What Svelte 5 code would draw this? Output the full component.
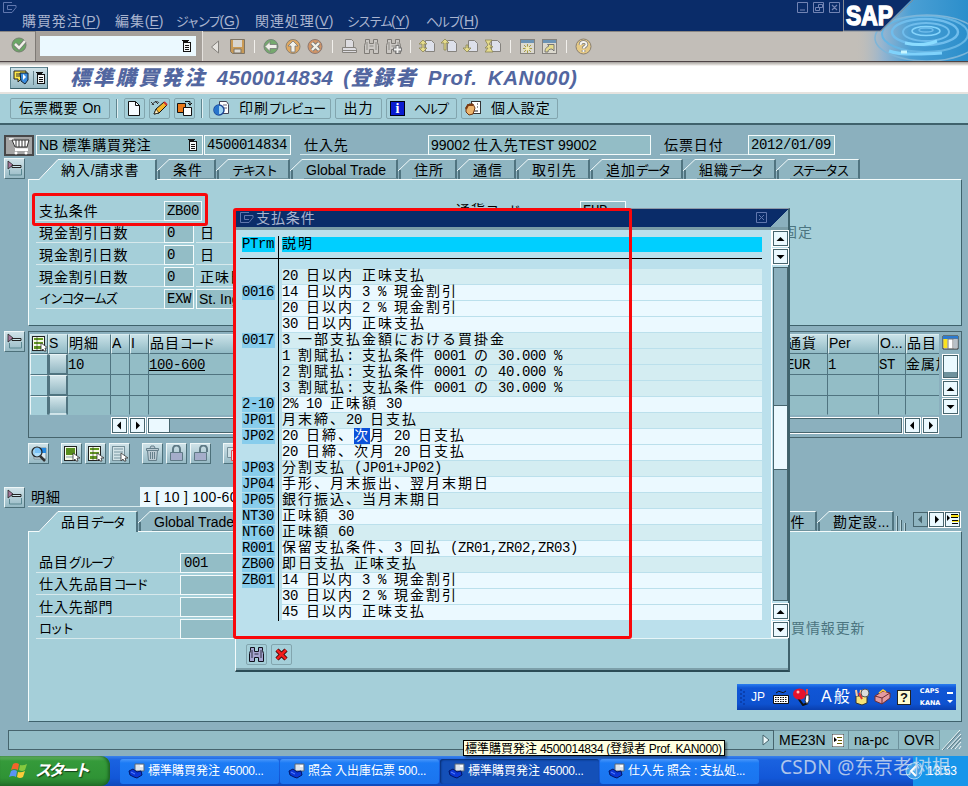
<script>
    const menus = [
        { text: '購買発注', key: 'P', width: 93 },
        { text: '編集', key: 'E', width: 61 },
        { text: 'ジャンプ', key: 'G', width: 79 },
        { text: '関連処理', key: 'V', width: 92 },
        { text: 'システム', key: 'Y', width: 79 },
        { text: 'ヘルプ', key: 'H', width: 60 },
    ];

    const topTabs = [
        { text: '条件', width: 59 },
        { text: 'テキスト', width: 74 },
        { text: 'Global Trade', width: 108 },
        { text: '住所', width: 59 },
        { text: '通信', width: 59 },
        { text: '取引先', width: 74 },
        { text: '追加データ', width: 93 },
        { text: '組織データ', width: 93 },
        { text: 'ステータス', width: 84 },
    ];

    const detailTabs = [
        { text: 'Global Trade', width: 110 },
        { text: '数量/重量', width: 100 },
        { text: '納入日程', width: 90 },
        { text: '納入', width: 60 },
        { text: '請求書', width: 90 },
        { text: '追加データ', width: 112 },
        { text: '国際取引条件', width: 117 },
        { text: '勘定設...', width: 77 },
    ];

    const terms = [
        { label: '支払条件', value: 'ZB00', wide: true },
        { label: '現金割引日数', value: '0', extra: '日' },
        { label: '現金割引日数', value: '0', extra: '日' },
        { label: '現金割引日数', value: '0', extra: '正味日数' },
        { label: 'インコタームズ', value: 'EXW', place: 'St. Ingbert' },
    ];

    const columns = [
        { text: 'S', width: 20 },
        { text: '明細', width: 43, value: '10' },
        { text: 'A', width: 19 },
        { text: 'I', width: 19 },
        { text: '品目コード', width: 180, value: '100-600', link: true },
        { text: 'テキスト (短)', width: 250 },
        { text: '正味価格', width: 180 },
        { text: '通貨', width: 42, value: 'EUR' },
        { text: 'Per', width: 51, value: '1' },
        { text: 'O...', width: 27, value: 'ST' },
        { text: '品目', width: 34, value: '金属加' },
    ];

    const details = [
        { label: '品目グループ', value: '001' },
        { label: '仕入先品目コード', value: '' },
        { label: '仕入先部門', value: '' },
        { label: 'ロット', value: '' },
    ];

    const payTerms = [
        { code: '', lines: ['20 日以内 正味支払'] },
        { code: '0016', lines: ['14 日以内 3 % 現金割引', '20 日以内 2 % 現金割引', '30 日以内 正味支払'] },
        {
            code: '0017',
            lines: [
                '3 一部支払金額における買掛金',
                '1 割賦払: 支払条件 0001 の 30.000 %',
                '2 割賦払: 支払条件 0001 の 40.000 %',
                '3 割賦払: 支払条件 0001 の 30.000 %',
            ],
        },
        { code: '2-10', lines: ['2% 10 正味額 30'] },
        { code: 'JP01', lines: ['月末締、20 日支払'] },
        { code: 'JP02', lines: ['20 日締、[次]月 20 日支払', '20 日締、次月 20 日支払'] },
        { code: 'JP03', lines: ['分割支払 (JP01+JP02)'] },
        { code: 'JP04', lines: ['手形、月末振出、翌月末期日'] },
        { code: 'JP05', lines: ['銀行振込、当月末期日'] },
        { code: 'NT30', lines: ['正味額 30'] },
        { code: 'NT60', lines: ['正味額 60'] },
        { code: 'R001', lines: ['保留支払条件、3 回払 (ZR01,ZR02,ZR03)'] },
        { code: 'ZB00', lines: ['即日支払 正味支払'] },
        { code: 'ZB01', lines: ['14 日以内 3 % 現金割引', '30 日以内 2 % 現金割引', '45 日以内 正味支払'] },
    ];

    const tasks = [
        { text: '標準購買発注 45000...' },
        { text: '照会 入出庫伝票 500...' },
        { text: '標準購買発注 45000...', active: true },
        { text: '仕入先 照会 : 支払処...' },
    ];

    const standard = [
        'back', 'save', '|', 'left', 'up', 'cancel', '|', 'print', 'find', 'findnext', '|',
        'first', 'prev', 'next', 'last', '|', 'session', 'shortcut', '|', 'help',
    ];

    // Split a label into kanji, kana and latin parts, each has its own pitch
    function runs(text) {
        const parts = text.match(/\[.\]|[ァ-ヿ]+|[ぁ-ん一-龥、]+|[^ぁ-ヿ一-龥、[]+|\[/g) || [];
        return parts.map((p) => {
            if (/^\[.\]$/.test(p)) return { kind: 'han picked', text: p[1] };
            if (/^[ァ-ヿ]/.test(p)) return { kind: 'kana', text: p };
            if (/^[ぁ-ん一-龥、]/.test(p)) return { kind: 'han', text: p };
            return { kind: 'latin', text: p };
        });
    }
</script>

{#snippet t(text)}<span class="t">{#each runs(text) as r}<span class={r.kind}>{r.text}</span>{/each}</span>{/snippet}

{#snippet list()}
    <svg class="list" width="10" height="12" viewBox="0 0 10 12" shape-rendering="crispEdges">
        <rect x="1.5" y="2.5" width="7" height="9" fill="#f4f8f8" stroke="#111" />
        <path d="M0 0h7v1H6v1H5v1H2V2H1V1H0z" fill="#111" />
        <path d="M3 5h4v1H3zM3 7h4v1H3zM3 9h4v1H3z" fill="#111" />
    </svg>
{/snippet}

{#snippet binocular(stroke, fill)}
    <path d="M2.5 1.5h4v4h4v-4h4v3l1 3v8h-5v-4h-4v4h-5v-8l1-3z" {fill} {stroke} />
    <path d="M6.500 8h4M4 4v8M13 4v8" {stroke} stroke-width=".8" />
{/snippet}

{#snippet sheet(d, x)}
    <path d="M{x + .5} 2.5h6l3 3v8h-9z" fill="#dde0ea" stroke="#85827d" />
    <path {d} fill="#e6dc8c" stroke="#8c8554" stroke-width=".8" />
{/snippet}

{#snippet icon(name)}
    <svg class="icon" width="17" height="17" viewBox="0 0 17 17">
        {#if name === 'back'}
            <path d="M11.500 3v12L4.500 9z" fill="#e5e3df" stroke="#85827d" />
        {:else if name === 'save'}
            <path d="M1.500 1.500h14v14h-12l-2-2z" fill="#c99a55" stroke="#7e7465" />
            <path d="M4 2h9v7H4z" fill="#d8d5cf" /><path d="M5 11h7v4H5z" fill="#dcdad5" stroke="#7e7465" />
        {:else if name === 'left'}
            <circle cx="8" cy="8.500" r="7" fill="#75a96d" stroke="#77867a" />
            <path d="M2 8.500l5-5v3h7v4H7v3z" fill="#f1f1e9" stroke="#777" stroke-width=".8" />
        {:else if name === 'up'}
            <circle cx="8" cy="8.500" r="7" fill="#dfa861" stroke="#8b8170" />
            <path d="M8 3l5 5h-3v6H6V8H3z" fill="#f1f1e9" stroke="#777" stroke-width=".8" />
        {:else if name === 'cancel'}
            <circle cx="8" cy="8.500" r="7" fill="#d19567" stroke="#8b7770" />
            <path d="M5 5l7 7M12 5l-7 7" stroke="#777" stroke-width="4" /><path d="M5 5l7 7M12 5l-7 7" stroke="#f1f1e9" stroke-width="2.400" />
        {:else if name === 'print'}
            <path d="M4.500 9V1.500h6l2 2V9M1.500 9.500h13l1 2v3h-14z" fill="#dddce0" stroke="#85827d" />
            <path d="M2 12.500h13" stroke="#85827d" />
        {:else if name === 'find'}
            {@render binocular('#7e7b76', '#cbc8c4')}
        {:else if name === 'findnext'}
            {@render binocular('#7e7b76', '#cbc8c4')}
            <path d="M12.500 7v9M8 11.500h9" stroke="#777" stroke-width="4" /><path d="M12.500 8v7M9 11.500h7" stroke="#f1f1ef" stroke-width="2" />
        {:else if name === 'first'}
            {@render sheet('M4 2l4 4H5v4h3l-4 4-4-4h3V6H0z', 6)}
        {:else if name === 'prev'}
            {@render sheet('M4 1l4 4H5v7H3V5H0z', 6)}
        {:else if name === 'next'}
            {@render sheet('M3 7h2v3h3l-4 4-4-4h3z', 5)}
        {:else if name === 'last'}
            {@render sheet('M0 2h7L4 6l4 3H5l3 5H0l3-4H0l3-3z', 6)}
        {:else if name === 'session' || name === 'shortcut'}
            <rect x="1.500" y="1.500" width="14" height="14" fill="#dcd9ce" stroke="#85827d" />
            <path d="M2 2h13v3H2z" fill="#6c93b4" />
            {#if name === 'session'}
                <path d="M8.500 6v9M4 10.500h9M5 7l7 7M12 7l-7 7" stroke="#a79e45" /><circle cx="8.500" cy="10.500" r="2" fill="#f5edb0" />
            {:else}
                <path d="M4 14c0-4 2-5 4-6L6.500 6.500H13V13l-2-2c-3 0-4 1-4 3z" fill="#e6dc8c" stroke="#777" />
            {/if}
        {:else if name === 'help'}
            <circle cx="8.500" cy="8.500" r="7.500" fill="#e6ca86" stroke="#8b8170" />
            <path d="M5.500 7c0-4 6-4 6-.5 0 2-3 2-3 4M8.500 12v2" fill="none" stroke="#777" stroke-width="3.500" /><path d="M5.500 7c0-4 6-4 6-.5 0 2-3 2-3 4M8.500 12v2" fill="none" stroke="#f7f5ef" stroke-width="2" />
        {:else if name === 'ok'}
            <circle cx="8" cy="8" r="7" fill="#6ba766" stroke="#74806f" />
            <path d="M4 7l4 4 6-7" fill="none" stroke="#777" stroke-width="4" /><path d="M4 7l4 4 6-7" fill="none" stroke="#f1f1e9" stroke-width="2.500" />
        {:else if name === 'page'}
            <path d="M2.500 1.500h7l4 4v10h-11z" fill="#f7fcff" stroke="#111" /><path d="M9.500 1.500v4h4" fill="none" stroke="#111" />
        {:else if name === 'edit'}
            <path d="M3 14l2-5 8-7 3 3-8 8z" fill="#f5b62b" stroke="#111" /><path d="M3 14l2-5 3 4z" fill="#fff0c0" stroke="#111" stroke-width=".7" />
            <path d="M0 2l3 3M4 1l3 3M1 5c2-4 6-4 7-2" stroke="#333" fill="none" /><path d="M13 2l3 3" stroke="#c33" stroke-width="2" />
        {:else if name === 'copy'}
            <path d="M1.500 3.500h8v9h-8z" fill="#e97818" stroke="#111" /><path d="M7.500 7.500h8v8h-8z" fill="#fff" stroke="#111" />
            <path d="M9 1.500h5v4M12 3l2 2 2-2" fill="none" stroke="#111" />
        {:else if name === 'preview'}
            <path d="M6.500 1.500h7l2 3v9h-9z" fill="#fff" stroke="#445" /><path d="M10 5h4M11 8h3" stroke="#667" />
            <circle cx="6" cy="10" r="5" fill="#9fd4f2" stroke="#1d4796" stroke-width="1.500" /><path d="M6 5v10a5 5 0 0 1 0-10" fill="#2874cc" />
        {:else if name === 'person'}
            <rect x="6.500" y="1.500" width="9" height="12" fill="#fff" stroke="#333" /><path d="M12 4h1M12 7h1M9 11h4" stroke="#222" />
            <path d="M1 7l3-3h4l2 4-2 6-4 1-3-3z" fill="#edb56e" stroke="#6d3510" /><path d="M1 9l2-4h5" stroke="#7b3b12" fill="none" stroke-width="2" />
        {:else if name === 'tree'}
            <path d="M2 1v8l5-4z" fill="#a8789c" stroke="#222" stroke-width=".8" /><path d="M6 5.500h9v2H6z" fill="#cfe6ec" stroke="#222" /><path d="M3.500 10v5h12V9" fill="none" stroke="#5a8791" />
        {:else if name === 'magnify'}
            <path d="M4 3h12v11H4z" fill="#d9e9f0" stroke="#7b8f99" /><path d="M5 3h11v5H5z" fill="#2388e2" />
            <circle cx="7" cy="7" r="5" fill="#9edaff" fill-opacity=".7" stroke="#222" stroke-width="1.200" /><path d="M10 11l5 5" stroke="#333" stroke-width="2.500" />
        {:else if name === 'block' || name === 'rows' || name === 'rowsoff'}
            <rect x="1.500" y="1.500" width="12" height="14" fill={name === 'rowsoff' ? '#d3e3e7' : '#f5fae8'} stroke={name === 'rowsoff' ? '#75909a' : '#222'} />
            {#if name === 'block'}
                <path d="M3 3h9v7H3z" fill="#578d1d" /><path d="M3 12h8" stroke="#87a2ae" />
            {:else if name === 'rows'}
                <path d="M3 3h9v2H3zM3 7h9v2H3zM3 11h9v3H3z" fill="#62991f" /><path d="M6 2v13" stroke="#333" stroke-width=".6" />
            {:else}
                <path d="M3 4h9M3 7h9M3 10h9M3 13h9" stroke="#7795a0" />
            {/if}
            <path d="M10 8v8l2-2 1 2h2l-1-3h3z" fill="#fff" stroke="#333" stroke-width=".8" />
        {:else if name === 'trash'}
            <path d="M3.500 5.500h10l-1 10h-8zM2.500 3.500h12v2h-12zM6 3l1-2h3l1 2" fill="#bccbd3" stroke="#657f8b" /><path d="M6.500 7v7M8.500 7v7M10.500 7v7" stroke="#657f8b" />
        {:else if name === 'lock' || name === 'unlock'}
            <path d={name === 'lock' ? 'M5 8V4a3.500 3.500 0 0 1 7 0v4' : 'M8 8V4a3.500 3.500 0 0 1 7 0v3'} fill="none" stroke="#5f7a86" stroke-width="2" />
            <path d="M2.500 7.500h12v8h-12z" fill="#a5adca" stroke="#5f7a86" />
        {:else if name === 'layers'}
            <path d="M2.500 2.500h9v10h-9z" fill="#cde0e5" stroke="#75909a" /><path d="M6.500 5.500h9v10h-9z" fill="#dfe7e9" stroke="#d4545c" />
        {:else if name === 'closered'}
            <path d="M4 4l9 9M13 4l-9 9" stroke="#300" stroke-width="4.500" /><path d="M4 4l9 9M13 4l-9 9" stroke="#f11d1d" stroke-width="2.800" />
        {:else if name === 'bino'}
            {@render binocular('#10101c', '#a5a5d0')}
        {:else if name === 'config'}
            <path d="M1 2h15v13H1z" fill="#fff" stroke="#333" /><path d="M1 2h15v3H1z" fill="#2d7bcf" /><path d="M1.500 5h4v9h-4z" fill="#fbe31d" /><path d="M6 5v10M11 5v10M6 5h9" stroke="#777" /><path d="M11.500 5h4v9h-4z" fill="#b9c1c7" />
        {:else if name === 'program'}
            <path d="M7 1h9v7H7z" fill="#dce4ed" stroke="#596678" /><path d="M12 2h3v2h-3z" fill="#fff" />
            <path d="M1 8l4-2 4 3 4-1 1 4-5 3-3-1-4-2z" fill="#0a35d4" stroke="#001466" /><path d="M3 9l4 2" stroke="#5b84ff" />
        {/if}
    </svg>
{/snippet}

{#snippet arrow(dir, off = false)}
    <span class="arrow" class:off>
        <svg width="9" height="9" viewBox="0 0 9 9">
            {#if dir === 'up'}<path d="M0.500 7h8l-4-4z" fill="#000" />
            {:else if dir === 'down'}<path d="M0.500 3h8l-4 4z" fill="#000" />
            {:else if dir === 'left'}<path d="M6 0.500v8L2 4.500z" fill={off ? '#46646d' : '#000'} />
            {:else}<path d="M3 0.500v8l4-4z" fill="#000" />{/if}
        </svg>
    </span>
{/snippet}

{#snippet tab(text, width, active = false)}
    <div class="tab" class:active style="width: {width}px">
        {#if active}
            <svg width="22" height="21" viewBox="0 0 22 21"><path d="M0 21L19 .5h3V21z" fill="#a5cfd9" /><path d="M0 20.500L19 .5h3" fill="none" stroke="#fff" /></svg>
        {:else}
            <svg width="14" height="20" viewBox="0 0 14 20"><path d="M1 12L12 .5h2V20H2z" fill="#8fb5c1" /><path d="M0 12L12 .5h2" fill="none" stroke="#f2fafa" /><path d="M2 11v9" stroke="#507480" stroke-width="2" /></svg>
        {/if}
        <div class="tab-body">{@render t(text)}</div>
    </div>
{/snippet}

<div class="screen">
    <header>
        <div class="menubar">
            <svg class="sysmenu" width="15" height="12" viewBox="0 0 15 12"><path d="M10 .5H1.500v10H10l4-5V3.500H5.500v4H10" fill="none" stroke="#6077ae" /></svg>
            <nav>
                {#each menus as m}
                    <span style="width: {m.width}px">{@render t(m.text)}<span class="key">(<u>{m.key}</u>)</span></span>
                {/each}
            </nav>
            <div class="winbtns">
                <svg width="44" height="12" viewBox="0 0 44 12" fill="none" stroke="#7284b4">
                    <path d="M.5.5h10v10H.5zM16.500.5h10v10h-10zM32.500.5h10v10h-10z" />
                    <path d="M3 8h5M35 3l5 5M40 3l-5 5" stroke-width="1.200" /><path d="M18.500 5.500h4v3h-4zM21.500 2.500h4v3h-4z" />
                </svg>
            </div>
        </div>
        <svg class="logo" width="125" height="61" viewBox="0 0 125 61">
            <defs>
                <linearGradient id="water" x1="0" x2="1"><stop offset="0" stop-color="#c2beb8" stop-opacity="0" /><stop offset=".25" stop-color="#93b4d0" /><stop offset=".5" stop-color="#4a9fd4" /><stop offset="1" stop-color="#2b8ecb" /></linearGradient>
                <clipPath id="pond"><path d="M68 0h57v61H22V31h16z" /></clipPath>
            </defs>
            <path d="M0 31h125v30H0z" fill="#c2beb8" />
            <path d="M0 0h70L38 31H0z" fill="#0a2c69" />
            <path d="M68 0h57v61H12V31h25z" fill="url(#water)" />
            <g clip-path="url(#pond)" fill="none" stroke="#70bdec">
                <ellipse cx="83" cy="30" rx="7" ry="2" stroke-width="1.500" /><ellipse cx="83" cy="31" rx="14" ry="4.500" stroke-width="1.500" stroke="#86d4fb" />
                <ellipse cx="83" cy="32" rx="23" ry="9" stroke-width="2" /><ellipse cx="82" cy="32" rx="33" ry="13" stroke-width="2.500" />
                <ellipse cx="82" cy="34" rx="43" ry="18" stroke-width="2" stroke="#66b5e3" /><ellipse cx="84" cy="38" rx="52" ry="23" stroke-width="1.500" stroke="#7db5d8" />
                <path d="M46 51q12 5 53 2" stroke="#7fd2fb" stroke-width="3" /><path d="M62 43q18 4 32-2" stroke="#8bdcff" stroke-width="3" /><path d="M58 52h6" stroke="#c8f6ff" stroke-width="3" />
            </g>
            <path d="M.5 0v31H38L70 0" fill="none" stroke="#858b93" />
            <text x="3" y="25" textLength="47" lengthAdjust="spacingAndGlyphs">SAP</text>
        </svg>
        <div class="toolbar">
            <div class="enter">{@render icon('ok')}</div>
            <div class="command"><div class="okcode">{@render list()}</div></div>
            <div class="std">
                {#each standard as name}
                    {#if name === '|'}<i class="bar"></i>{:else}{@render icon(name)}{/if}
                {/each}
            </div>
        </div>
    </header>

    <div class="titlebar">
        <span class="raised services">
            <svg width="18" height="17" viewBox="0 0 18 17"><path d="M1 2h12v8H8l-3 3v-3H1z" fill="#ffe84a" stroke="#222" /><path d="M3 5h6M3 7h5" stroke="#333" /><path d="M7 4h8v7l-3 4-4-3z" fill="#3a8de0" stroke="#123" /><path d="M10 5l3 3-3 3z" fill="#fff" /></svg>
            <i></i>{@render list()}
        </span>
        <h1><b class="wide">標準購買発注</b> 4500014834 (<b>登録者</b> <span>Prof. KAN000)</span></h1>
    </div>

    <div class="appbar">
        <span class="flat" style="width: 100px">{@render t('伝票概要 On')}</span>
        <i class="bar"></i>
        <span class="flat sq">{@render icon('page')}</span>
        <span class="flat sq">{@render icon('edit')}</span>
        <span class="flat sq">{@render icon('copy')}</span>
        <i class="bar"></i>
        <span class="flat lead" style="width: 122px">{@render icon('preview')}{@render t('印刷プレビュー')}</span>
        <span class="flat" style="width: 47px">{@render t('出力')}</span>
        <span class="flat lead" style="width: 71px"><em class="info">i</em>{@render t('ヘルプ')}</span>
        <span class="flat lead" style="width: 97px">{@render icon('person')}{@render t('個人設定')}</span>
    </div>

    <main>
        <div class="docline">
            <svg class="cart" width="30" height="21" viewBox="0 0 30 21"><rect x="1" y="1" width="28" height="19" fill="#a4a5a5" stroke="#474748" stroke-width="2" /><path d="M5 4h4l3 10h12" fill="none" stroke="#fff" stroke-width="1.500" /><path d="M8 5h17l-2 7H11z" fill="#fff" stroke="#333" /><path d="M12 5v7M15 5v7M18 5v7M21 5v7" stroke="#333" /><path d="M11 15h13" stroke="#fff" stroke-width="2" /><circle cx="12" cy="18" r="1.500" fill="#fff" /><circle cx="22" cy="18" r="1.500" fill="#fff" /></svg>
            <span class="field doctype">{@render t('NB 標準購買発注')}{@render list()}</span>
            <span class="field mono docno">4500014834</span>
            <span class="label vendor">{@render t('仕入先')}</span>
            <span class="field vendorname">{@render t('99002 仕入先TEST 99002')}</span>
            <span class="label date">{@render t('伝票日付')}</span>
            <span class="field mono dateval">2012/01/09</span>
        </div>

        <section class="block headblock">
            <span class="raised sq">{@render icon('tree')}</span>
            <div class="pane">
                <div class="tabs">
                    {@render tab('納入/請求書', 118, true)}
                    {#each topTabs as x}{@render tab(x.text, x.width)}{/each}
                </div>
                <div class="panel">
                    <div class="form">
                        {#each terms as row, i}
                            <div class="row">
                                <span class="label">{@render t(row.label)}</span>
                                <span class="field mono val" class:wide={row.wide}>{row.value}</span>
                                {#if row.extra}<span class="label extra">{@render t(row.extra)}</span>{/if}
                                {#if row.place}<span class="field place">{@render t(row.place)}</span>{/if}
                                {#if i === 0}
                                    <span class="label cur">{@render t('通貨コード')}</span>
                                    <span class="field mono curval">EUR</span>
                                {:else if i === 1}
                                    <span class="fixed">{@render t('固定')}</span>
                                {/if}
                            </div>
                        {/each}
                    </div>
                </div>
            </div>
        </section>

        <section class="block itemblock">
            <span class="raised sq">{@render icon('tree')}</span>
            <div class="pane">
                <div class="grid">
                    <div class="cells">
                        <div class="tr th">
                            <span class="pick">{@render icon('rows')}</span>
                            {#each columns as c}<span style="width: {c.width}px">{@render t(c.text)}</span>{/each}
                        </div>
                        {#each [0, 1, 2] as r}
                            <div class="tr" class:last={r === 2}>
                                <span class="pick knob"></span>
                                {#each columns as c, i}
                                    <span class:status={i === 0} style="width: {c.width}px">
                                        {#if r === 0 && c.value}
                                            {#if c.link}<u class="mono">{c.value}</u>{:else if /[一-龥]/.test(c.value)}{@render t(c.value)}{:else}<span class="mono">{c.value}</span>{/if}
                                        {/if}
                                    </span>
                                {/each}
                            </div>
                        {/each}
                        <div class="hscroll">
                            {@render arrow('left')}{@render arrow('right')}
                            <div class="track"><i></i></div>
                            {@render arrow('left')}{@render arrow('right')}
                        </div>
                    </div>
                    <div class="vscroll">
                        {@render icon('config')}
                        <div class="vtrack"><i></i></div>
                        {@render arrow('up')}{@render arrow('down')}
                    </div>
                </div>
                <div class="tools">
                    {#each ['magnify', '', 'block', 'rows', 'rowsoff', '', 'trash', 'lock', 'unlock', '', 'layers'] as name}
                        {#if name}<span class="raised sq">{@render icon(name)}</span>{:else}<i></i>{/if}
                    {/each}
                </div>
            </div>
        </section>

        <section class="block detailblock">
            <span class="raised sq">{@render icon('tree')}</span>
            <div class="pane">
                <div class="itemline">
                    <span class="label">{@render t('明細')}</span>
                    <span class="combo">1 [ 10 ] 100-600</span>
                </div>
                <div class="tabs">
                    {@render tab('品目データ', 99, true)}
                    {#each detailTabs as x}{@render tab(x.text, x.width)}{/each}
                    <svg class="more" width="12" height="20" viewBox="0 0 12 20"><path d="M2.500 4v16M6.500 8v12M10.500 11v9" stroke="#46646d" /><path d="M1.500 4v16M5.500 8v12M9.500 11v9" stroke="#b8d4dc" /></svg>
                    <div class="tabnav">
                        {@render arrow('left', true)}{@render arrow('right')}
                        <span class="arrow"><svg width="13" height="12" viewBox="0 0 13 12"><path d="M1 1v6l3-3z" fill="#000" /><path d="M5 1h8v2H5zM6 6h7v2H6z" fill="#fbe31d" /><path d="M5 .5h7M5 3.500h7M6 6.500h6M6 9.500h6" stroke="#000" /></svg></span>
                    </div>
                </div>
                <div class="panel">
                    <div class="form">
                        {#each details as row, i}
                            <div class="row">
                                <span class="label long">{@render t(row.label)}</span>
                                <span class="field mono group">{row.value}</span>
                                {#if i === 3}<span class="fixed renew">{@render t('買情報更新')}</span>{/if}
                            </div>
                        {/each}
                    </div>
                </div>
            </div>
        </section>

        <div class="statusbar">
            <div class="message"><svg width="8" height="12" viewBox="0 0 8 12"><path d="M1 1l6 5-6 5z" fill="#e9f6f8" stroke="#46646d" /></svg></div>
            <span class="tcode">{@render t('ME23N')}<svg width="12" height="13" viewBox="0 0 12 13"><rect width="12" height="13" fill="#fff" stroke="#333" /><path d="M2 3v5l3-2z" fill="#000" /><path d="M5 3.500h5M6 6.500h4M5 9.500h5" stroke="#665c00" /></svg></span>
            <span class="host">{@render t('na-pc')}</span>
            <span class="mode">{@render t('OVR')}</span>
            <svg class="grip" width="22" height="20" viewBox="0 0 22 20"><path d="M0 0h20L2 20H0z" fill="#93bdc6" /><path d="M20 0L2 20M21 4L7 19M21 8L11 19M21 12L15 19M21 16L19 19" stroke="#eef6f8" /><path d="M20 1.500L3 20M21 5.500L8.500 19M21 9.500L12.500 19" stroke="#46646d" stroke-width=".7" /></svg>
        </div>
    </main>

    <footer>
        <div class="start">
            <svg width="20" height="18" viewBox="0 0 20 18"><path d="M4 2q3-2 6 0L9 8Q5 6 2 8z" fill="#f3652b" /><path d="M11 3q3 1 7-1l-2 6q-3 2-6 0z" fill="#86c93f" /><path d="M2 9q3-2 6 0l-1 6q-3-2-7 0z" fill="#5994f5" /><path d="M9 10q3 1 7-1l-2 6q-3 2-6 0z" fill="#fbcb3a" /></svg>
            <strong>スタート</strong>
        </div>
        {#each tasks as task}
            <div class="task" class:active={task.active}>{@render icon('program')}{@render t(task.text)}</div>
        {/each}
        <div class="tray"><svg width="18" height="20" viewBox="0 0 18 20"><circle cx="9" cy="10" r="8" fill="#3f9fe8" stroke="#a5d5f5" /><path d="M11 5L6 10l5 5" fill="none" stroke="#fff" stroke-width="2" /></svg><span>13:53</span></div>
    </footer>

    <div class="dialog">
        <div class="dlg-title">
            <svg width="15" height="12" viewBox="0 0 15 12"><path d="M10 .5H1.500v10H10l4-5V3.500H5.500v4H10" fill="none" stroke="#6077ae" /></svg>
            {@render t('支払条件')}
            <svg class="close" width="12" height="12" viewBox="0 0 12 12" fill="none" stroke="#6077ae"><path d="M.5.5h10v10H.5zM3 3l5 5M8 3l-5 5" /></svg>
        </div>
        <div class="dlg-body">
            <div class="listing mono">
                <div class="lhead"><span class="code">PTrm</span><span class="desc">{@render t('説明')}</span></div>
                <div class="lrows">
                    {#each payTerms as p, g}
                        {#each p.lines as line, i}
                            <div class="lrow">
                                <span class="code" class:filled={i === 0 && p.code}>{i === 0 ? p.code : ''}</span>
                                <span class="desc" class:odd={g % 2 === 0}>{@render t(line)}</span>
                            </div>
                        {/each}
                    {/each}
                </div>
            </div>
            <div class="dscroll">
                {@render arrow('up')}{@render arrow('down')}
                <div class="dtrack"><i></i></div>
                {@render arrow('up')}{@render arrow('down')}
            </div>
        </div>
        <div class="dlg-foot">
            <span class="flat sq">{@render icon('bino')}</span>
            <span class="flat sq">{@render icon('closered')}</span>
        </div>
    </div>

    <div class="mark mark-term"></div>
    <div class="mark mark-list"></div>

    <div class="ime">
        <svg width="6" height="18" viewBox="0 0 6 18"><path d="M1 2h2M4 4h2M1 6h2M4 8h2M1 10h2M4 12h2M1 14h2M4 16h2" stroke="#0a3fae" stroke-width="2" /></svg>
        <b>JP</b>
        <svg width="17" height="16" viewBox="0 0 17 16"><path d="M3 4q3-3 5-1t5-1" stroke="#111" fill="none" /><path d="M.5 6.500h15v8H.5z" fill="#fff" stroke="#111" /><path d="M2 8.500h12M2 10.500h12M2 12.500h12" stroke="#111" stroke-dasharray="1.500 1" /></svg>
        <svg width="18" height="18" viewBox="0 0 18 18"><path d="M5 10l5 7 5-2" stroke="#111" stroke-width="2" fill="none" /><ellipse cx="6.500" cy="6" rx="6.500" ry="5.500" fill="#e5112c" /><path d="M14 1v6" stroke="#e44" stroke-width="2" /><path d="M13 7h3v6l-2 3-2-3z" fill="#fff" stroke="#333" /><circle cx="5" cy="4" r="1.500" fill="#fbb" /></svg>
        <span class="kana-mode">A 般</span>
        <svg width="17" height="18" viewBox="0 0 17 18"><path d="M2 8h11v7l-5 2-6-2z" fill="#f7e377" stroke="#333" /><path d="M3 8L2 2M6 8l1-6" stroke="#fc9" stroke-width="2" /><circle cx="11" cy="5" r="4" fill="#ddd" stroke="#555" /><path d="M5 5l3 6" stroke="#d33" stroke-width="2" /></svg>
        <svg width="17" height="18" viewBox="0 0 17 18"><path d="M1 8l8-5 7 2v5l-8 6-7-3z" fill="#e59aa0" stroke="#6c2d33" /><path d="M1 8l7 2 8-5M8 10v6" fill="none" stroke="#6c2d33" /><path d="M5 5l4-3 3 2" stroke="#fc3" stroke-width="1.500" fill="none" /></svg>
        <span class="q">?</span>
        <small>CAPS<br />KANA</small>
        <svg width="8" height="18" viewBox="0 0 8 18"><path d="M1 4h6v2H1zM1 12h6l-3 3z" fill="#fff" /></svg>
    </div>

    <div class="tooltip">{@render t('標準購買発注 4500014834 (登録者 Prof. KAN000)')}</div>
    <div class="watermark">CSDN @东京老树根</div>
</div>

<style>
    :global(body) {
        margin: 0;
    }

    .screen {
        position: relative;
        width: 968px;
        height: 786px;
        overflow: hidden;
        display: flex;
        flex-direction: column;
        background: #8bb0be;
        color: #000;
        font-family: "Liberation Sans", "Noto Sans CJK JP", sans-serif;
        font-size: 14px;
        white-space: nowrap;
    }

    .screen :global(*) {
        box-sizing: border-box;
    }

    svg {
        display: block;
        flex: none;
    }

    .t {
        line-height: 18px;
        white-space: pre;
    }

    .han {
        font-size: 14px;
        letter-spacing: 0.900px;
    }

    .kana {
        font-size: 13px;
        letter-spacing: -1.900px;
    }

    .latin {
        font-size: 14px;
    }

    .mono {
        font-family: "Liberation Mono", "Noto Sans CJK JP", monospace;
        font-size: 14px;
        letter-spacing: -0.400px;
    }

    /* header */
    header {
        flex: none;
        height: 62px;
        display: grid;
        grid-template-columns: 843px 125px;
        grid-template-rows: 31px 30px;
        border-bottom: 1px solid #4e4446;
        background: #c2beb8;
    }

    .menubar {
        background: #0a2c69;
        color: #a9b4cf;
        display: flex;
        align-items: flex-start;
        box-shadow: 0 1px 0 #7f8287;
    }

    .sysmenu {
        margin: 2px 3px 0 2px;
    }

    nav {
        display: flex;
        flex: 1;
        padding: 12px 0 0 2px;
        line-height: 19px;
    }

    nav u {
        text-underline-offset: 2px;
    }

    .winbtns {
        padding: 2px 2px 0 0;
    }

    .logo {
        grid-column: 2;
        grid-row: 1 / 3;
    }

    .logo text {
        font: bold 27px "Liberation Sans", sans-serif;
        fill: #fff;
        stroke: #fff;
        stroke-width: 1.500px;
    }

    .toolbar {
        grid-column: 1;
        grid-row: 2;
        display: flex;
        box-shadow: inset 0 1px 0 #8a8783;
    }

    .enter {
        width: 35px;
        padding: 6px 0 0 11px;
    }

    .command {
        width: 168px;
        background: #a6a19b;
        border-left: 1px solid #7e7a75;
        border-right: 1px solid #e5e2de;
        padding: 5px 6px 4px 4px;
    }

    .okcode {
        height: 20px;
        background: #ebf9ff;
        display: flex;
        justify-content: flex-end;
        padding: 4px 4px 0 0;
    }

    .std {
        display: flex;
        align-items: center;
        gap: 5px;
        padding: 0 0 0 4px;
    }

    .std .bar {
        width: 1px;
        height: 13px;
        background: #f2f0ec;
        margin: 0 3px;
    }

    /* title */
    .titlebar {
        flex: none;
        height: 32px;
        display: flex;
        align-items: center;
        padding: 1px 0 0 10px;
        background: linear-gradient(#a39f9b, #e5e2de 3px, #fff 4px);
        border-bottom: 2px solid #e6e3df;
    }

    .raised {
        display: flex;
        align-items: center;
        justify-content: center;
        flex: none;
        background: linear-gradient(#cfe2e8, #97bac5);
        border: 1px solid #4d707a;
        border-top-color: #eef7f8;
        border-left-color: #eef7f8;
    }

    .raised.sq {
        width: 21px;
        height: 21px;
    }

    .services {
        width: 38px;
        height: 22px;
        gap: 2px;
        border-color: #5f8591 #3c5f69 #3c5f69 #5f8591;
    }

    .services i {
        width: 1px;
        height: 14px;
        background: #628089;
    }

    h1 {
        margin: 0 0 0 22px;
        font-size: 20.500px;
        line-height: 24px;
        font-style: italic;
        font-weight: bold;
        color: #5266a0;
        letter-spacing: 0.250px;
        word-spacing: 4px;
    }

    h1 b {
        font-size: 20.500px;
        letter-spacing: 2px;
    }

    h1 .wide {
        letter-spacing: 2.300px;
    }

    h1 span {
        letter-spacing: 0.600px;
    }

    .appbar {
        flex: none;
        height: 31px;
        display: flex;
        align-items: center;
        gap: 4px;
        padding: 0 0 1px 10px;
        background: #a5cfd9;
        border-bottom: 2px solid #3f626c;
    }

    .flat {
        flex: none;
        display: flex;
        align-items: center;
        justify-content: center;
        height: 21px;
        border: 1px solid #82a5ae;
        border-radius: 2px;
    }

    .flat.sq {
        width: 21px;
    }

    .flat.lead {
        justify-content: flex-start;
        gap: 9px;
        padding-left: 3px;
    }

    .appbar .bar {
        width: 2px;
        height: 19px;
        margin: 0 2px;
        border-left: 1px solid #5f858f;
        border-right: 1px solid #e0f0f3;
    }

    .info {
        width: 15px;
        height: 15px;
        background: #0a1bd0;
        border: 1px solid #001;
        color: #fff;
        font: bold 14px/13px "Liberation Serif", serif;
        text-align: center;
    }

    main {
        flex: 1;
        min-height: 0;
        display: flex;
        flex-direction: column;
        padding: 10px 6px 0 4px;
    }

    .field {
        flex: none;
        display: flex;
        align-items: center;
        height: 20px;
        padding: 0 4px 0 2px;
        background: #93bdc6;
        border: 1px solid #f4fbfb;
        overflow: hidden;
    }

    .label {
        flex: none;
        display: flex;
        align-items: center;
        height: 20px;
        padding-left: 4px;
        border-bottom: 1px solid #d7e9ec;
    }

    .docline {
        display: flex;
        height: 20px;
    }

    .doctype {
        width: 167px;
        margin: 0 1px 0 2px;
        justify-content: space-between;
    }

    .docno {
        width: 87px;
    }

    .vendor {
        margin-left: 9px;
        width: 128px;
    }

    .vendorname {
        width: 223px;
    }

    .date {
        margin-left: 9px;
        width: 88px;
    }

    .dateval {
        width: 87px;
    }

    .block {
        display: flex;
        gap: 3px;
    }

    .pane {
        flex: 1;
        min-width: 0;
    }

    .headblock {
        margin-top: 3px;
        height: 168px;
    }

    .tabs {
        display: flex;
        height: 21px;
        padding-left: 11px;
        align-items: flex-start;
    }

    .tab {
        display: flex;
        flex: none;
        height: 20px;
        position: relative;
    }

    .tab-body {
        flex: 1;
        min-width: 0;
        overflow: hidden;
        border-top: 1px solid #f2fafa;
        border-right: 2px solid #507480;
        border-bottom: 1px solid #6e929d;
        background: #8fb5c1;
        padding: 1px 0 0 2px;
    }

    .tab.active {
        height: 21px;
        z-index: 1;
    }

    .tab.active .tab-body {
        background: #a5cfd9;
        border-bottom: 0;
        padding-left: 0;
    }

    .headblock .pane,
    .detailblock .pane {
        display: flex;
        flex-direction: column;
    }

    .headblock .tabs {
        margin-top: 1px;
    }

    .panel {
        flex: 1;
        margin-top: -1px;
        background: #a5cfd9;
        border: 1px solid #f4fbfb;
        border-right-color: #3f626c;
        border-bottom-color: #3f626c;
        overflow: hidden;
    }

    .form {
        display: flex;
        flex-direction: column;
        gap: 2px;
        padding: 21px 0 0 7px;
    }

    .row {
        display: flex;
        height: 20px;
    }

    .row .label {
        width: 128px;
        padding-left: 3px;
    }

    .row .val {
        width: 30px;
    }

    .row .val.wide {
        width: 38px;
    }

    .row .extra {
        width: 60px;
        margin-left: 2px;
        padding-left: 4px;
    }

    .row .place {
        width: 120px;
        margin-left: 2px;
    }

    .row .cur {
        margin-left: 251px;
        width: 127px;
    }

    .row .curval {
        width: 46px;
    }

    .fixed {
        margin-left: 527px;
        color: #4c7580;
    }

    .row .long {
        width: 144px;
    }

    .row .group {
        width: 160px;
        padding-left: 3px;
    }

    .fixed.renew {
        margin-left: 451px;
    }

    /* item table */
    .itemblock {
        margin-top: 5px;
        height: 156px;
    }

    .grid {
        display: flex;
        height: 107px;
        border: 1px solid #46646d;
        padding: 2px 2px 0 1px;
    }

    .cells {
        width: 910px;
        overflow: hidden;
    }

    .tr {
        display: flex;
        height: 21px;
        width: 910px;
    }

    .tr.last {
        height: 19px;
    }

    .tr > span {
        flex: none;
        border-right: 1px solid #507480;
        border-bottom: 1px solid #507480;
        background: #93bdc6;
        overflow: hidden;
        line-height: 20px;
    }

    .tr.last > span {
        border-bottom-color: transparent;
    }

    .tr > span:nth-child(6) {
        flex: 0 0 180px;
    }

    .tr > span:nth-child(7) {
        flex: 1 1 0;
    }

    .th {
        height: 20px;
    }

    .th > span {
        background: linear-gradient(#c9e2e8, #91bac5);
        border-top: 1px solid #dcedf0;
        border-left: 1px solid #dcedf0;
        line-height: 17px;
    }

    .th .t {
        line-height: 17px;
    }

    .tr > .pick {
        width: 18px;
    }

    .tr > .knob {
        background: #a5cfd9;
        border: 1px solid #507480;
        border-top-color: #eaf5f7;
        border-left-color: #eaf5f7;
    }

    .tr > .status {
        background: linear-gradient(#d3e6eb, #94b8c3);
        border: 2px solid #507480;
        border-top: 1px solid #eaf5f7;
    }

    .hscroll {
        display: flex;
        gap: 3px;
        height: 20px;
        margin: 0 1px 0 82px;
        padding-top: 3px;
    }

    .arrow {
        flex: none;
        display: flex;
        align-items: center;
        justify-content: center;
        width: 15px;
        height: 15px;
        background: #ebf9ff;
        border: 1px solid #46646d;
        box-shadow: 0 0 0 1px #fff;
    }

    .arrow.off {
        background: #8fb5c1;
        box-shadow: none;
    }

    .track {
        flex: 1;
        height: 15px;
        background: #8bb0be;
        border: 1px solid #46646d;
        box-shadow: 0 0 0 1px #fff;
    }

    .track i {
        display: block;
        width: 21px;
        height: 13px;
        background: #ebf9ff;
        border-right: 1px solid #46646d;
    }

    .vscroll {
        display: flex;
        flex-direction: column;
        align-items: center;
        gap: 3px;
        width: 18px;
        margin-left: 2px;
    }

    .vtrack {
        width: 15px;
        height: 23px;
        margin: 1px 0 0;
        border: 1px solid #46646d;
        box-shadow: 0 0 0 1px #fff;
        background: #6f929d;
    }

    .vtrack i {
        display: block;
        height: 16px;
        background: #ebf9ff;
    }

    .tools {
        display: flex;
        gap: 3px;
        margin-top: 5px;
    }

    .tools i {
        width: 6px;
    }

    /* item details */
    .detailblock {
        height: 235px;
    }

    .itemline {
        display: flex;
        height: 20px;
    }

    .itemline .label {
        width: 112px;
        padding-left: 3px;
    }

    .combo {
        width: 300px;
        background: #ebf9ff;
        padding-left: 3px;
        line-height: 20px;
        letter-spacing: 0.300px;
    }

    .detailblock .tabs {
        margin-top: 4px;
    }

    .more {
        margin: 1px 6px 0 1px;
    }

    .tabnav {
        display: flex;
        gap: 1px;
        padding-top: 1px;
    }

    .statusbar {
        display: flex;
        height: 20px;
        margin: 8px 0 0 4px;
    }

    .message {
        width: 766px;
        border: 1px solid #46646d;
        background: #93bdc6;
        display: flex;
        justify-content: flex-end;
        padding: 3px 3px;
    }

    .statusbar > span {
        display: flex;
        align-items: center;
        gap: 6px;
        background: #93bdc6;
        border: 1px solid #6e929d;
        border-left: 0;
        padding-left: 5px;
    }

    .tcode {
        width: 75px;
    }

    .host {
        width: 50px;
    }

    .mode {
        width: 41px;
    }

    /* taskbar */
    footer {
        flex: none;
        height: 30px;
        display: flex;
        align-items: center;
        background: linear-gradient(#3a83ec, #1a62e0 4px, #1257d8 22px, #0f48b8);
        color: #fff;
        font-size: 12px;
    }

    .start {
        width: 110px;
        height: 30px;
        margin-right: 10px;
        display: flex;
        align-items: center;
        gap: 6px;
        padding-left: 9px;
        border-radius: 0 9px 9px 0;
        background: linear-gradient(#6cb56a, #359a3a 5px, #2f9335 22px, #22702a);
        box-shadow: inset -2px 0 3px #1d6424;
    }

    .start strong {
        font-size: 16px;
        font-style: italic;
        letter-spacing: -3px;
        line-height: 26px;
        text-shadow: 1px 1px 1px #123f16;
    }

    .task {
        width: 159px;
        height: 25px;
        margin-right: 1px;
        display: flex;
        align-items: center;
        gap: 3px;
        padding-left: 8px;
        border-radius: 3px;
        background: linear-gradient(#4a97fb, #1c7bf5 4px, #1a74ee);
    }

    .task.active {
        background: #1450b8;
        box-shadow: inset 1px 1px 2px #072d73;
    }

    .task .han,
    .tooltip .han {
        font-size: 12px;
        letter-spacing: 0;
    }

    .task .latin,
    .tooltip .latin {
        font-size: 12px;
        letter-spacing: -0.350px;
    }

    .tray {
        flex: 1;
        height: 30px;
        margin-left: 145px;
        display: flex;
        align-items: center;
        gap: 4px;
        background: linear-gradient(90deg, transparent 8px, #1795ea 8px);
    }

    /* value help window */
    .dialog {
        position: absolute;
        left: 235px;
        top: 208px;
        width: 555px;
        height: 464px;
        display: flex;
        flex-direction: column;
        background: #a5cfd9;
        border: 1px solid #f4fbfb;
        border-top-color: #8d99a8;
        border-right: 2px solid #3f626c;
        border-bottom: 2px solid #2b4c56;
        box-shadow: inset 0 -2px 0 #7da0aa;
    }

    .dlg-title {
        flex: none;
        display: flex;
        align-items: center;
        gap: 2px;
        height: 18px;
        padding-left: 3px;
        background: linear-gradient(to bottom right, #0a2c69 50%, #8bb0be 50%) right / 17px 18px no-repeat, linear-gradient(#0a2c69, #0a2c69) left / calc(100% - 17px) 18px no-repeat;
        color: #a9b4cf;
    }

    .close {
        margin-left: auto;
        margin-right: 20px;
    }

    .dlg-body {
        flex: none;
        display: flex;
        height: 412px;
        border-top: 3px solid #7a9ca6;
        border-bottom: 1px solid #e6f5f8;
        background: #bbe0ec;
    }

    .listing {
        width: 535px;
        padding: 6px 9px 0 4px;
    }

    .lhead {
        display: flex;
        height: 23px;
        border-bottom: 1px solid #000;
        line-height: 15px;
    }

    .lhead .code,
    .lhead .desc {
        height: 15px;
        margin-top: 1px;
        background: #00cfff;
    }

    .code {
        flex: none;
        width: 33px;
        margin-left: 2px;
    }

    .desc {
        flex: 1;
        margin-left: 7px;
    }

    .lhead,
    .lrows {
        background: linear-gradient(#000, #000) 38px 0 / 1px 100% no-repeat;
    }

    .lrows {
        padding-top: 10px;
    }

    .lrow {
        display: flex;
        height: 16px;
        line-height: 15px;
    }

    .lrow .code,
    .lrow .desc {
        height: 15px;
    }

    .code.filled {
        background: #88cdec;
    }

    .lrow .desc {
        background: #ebf9ff;
    }

    .lrow .desc.odd {
        background: #d4edf2;
    }

    .listing .t {
        line-height: 15px;
    }

    .listing .han {
        font-size: 14px;
        letter-spacing: 2px;
    }

    .listing .picked {
        background: #0a50d8;
        color: #fff;
    }

    .dscroll {
        display: flex;
        flex-direction: column;
        align-items: center;
        gap: 3px;
        width: 17px;
        padding: 1px 0;
        border-left: 1px solid #fff;
    }

    .dtrack {
        flex: 1;
        width: 15px;
        background: #8bb0be;
        border: 1px solid #46646d;
        padding-top: 137px;
    }

    .dtrack i {
        display: block;
        height: 65px;
        background: #ebf9ff;
        border-bottom: 1px solid #46646d;
        border-top: 1px solid #46646d;
    }

    .dlg-foot {
        display: flex;
        gap: 4px;
        padding: 5px 0 0 10px;
    }

    .mark {
        position: absolute;
        border: 3px solid #f9070a;
        border-radius: 3px;
    }

    .mark-term {
        left: 32px;
        top: 193px;
        width: 176px;
        height: 33px;
    }

    .mark-list {
        left: 233px;
        top: 208px;
        width: 399px;
        height: 431px;
    }

    .ime {
        position: absolute;
        left: 737px;
        top: 684px;
        width: 219px;
        height: 26px;
        display: flex;
        align-items: center;
        gap: 3px;
        padding-left: 2px;
        background: linear-gradient(#2a7df0, #1056d6 4px, #0e52d0 20px, #0a3fae);
        color: #fff;
    }

    .ime b {
        font-weight: normal;
        font-size: 12px;
        margin: 0 5px 0 3px;
    }

    .kana-mode {
        font-size: 16px;
        letter-spacing: -0.800px;
        margin: 0 2px 0 7px;
        line-height: 24px;
    }

    .q {
        width: 14px;
        height: 15px;
        margin: 0 3px;
        background: #fffcd0;
        border: 1px solid #222;
        color: #111;
        font: bold 13px/13px "Liberation Sans", sans-serif;
        text-align: center;
    }

    .ime small {
        font: bold 6.500px/12px "DejaVu Sans", sans-serif;
        margin: 0 3px;
    }

    .tooltip {
        position: absolute;
        left: 463px;
        top: 740px;
        width: 262px;
        height: 16px;
        background: #ffffe1;
        border: 1px solid #000;
        padding-left: 1px;
        line-height: 14px;
        box-shadow: 2px 2px 2px rgba(0, 0, 0, 0.4);
    }

    .tooltip .t {
        line-height: 13px;
    }

    .watermark {
        position: absolute;
        left: 780px;
        top: 754px;
        font: 19px/26px "Noto Sans", "Noto Sans CJK SC", sans-serif;
        color: rgba(225, 232, 240, 0.75);
        letter-spacing: 0.300px;
    }
</style>
